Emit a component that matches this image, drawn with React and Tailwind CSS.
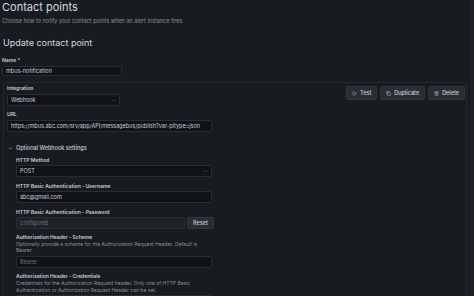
import { Play, Copy, Trash2, ChevronDown } from 'lucide-react';

const font = { fontFamily: 'Inter, "Noto Sans", sans-serif' };

function Label({ children, className = '' }) {
    return (
        <div className={`text-[5px] leading-[7px] font-semibold text-[#ccccdc] ${className}`}>
            {children}
        </div>
    );
}

function Input({ value, width, className = '', muted = false, children }) {
    return (
        <div
            className={`h-[12px] flex items-center justify-between px-[3px] rounded-[1.5px] border border-[#2a2d33] ${muted ? 'bg-[#1e2126] text-[#6e7079]' : 'bg-[#111217] text-[#ccccdc]'} text-[5.5px] ${width} ${className}`}
        >
            <span className="truncate">{value}</span>
            {children}
        </div>
    );
}

function Btn({ icon: Icon, label }) {
    return (
        <button className="h-[14px] px-[5px] flex items-center gap-[3px] rounded-[1.5px] bg-[#2a2d33] border border-[#33363c] text-[5.5px] font-medium text-[#ccccdc]">
            <Icon size={5} strokeWidth={2} />
            {label}
        </button>
    );
}

export default function App() {
    return (
        <div style={font} className="w-[474px] h-[296px] overflow-hidden bg-[#181b1f] flex">
            <div className="w-[467px] pl-[2px] flex flex-col">
                <h1 className="text-[11px] leading-[14px] text-[#d8d9e0] font-normal">Contact points</h1>
                <p className="mt-[4px] text-[5.5px] leading-[7px] text-[#8e8e99]">
                    Choose how to notify your contact points when an alert instance fires
                </p>
                <h2 className="mt-[12px] text-[9px] leading-[12px] text-[#d8d9e0] font-normal pl-[1px]">
                    Update contact point
                </h2>

                <Label className="mt-[8px]">Name *</Label>
                <Input value="mbus-notification" width="w-[120px]" className="mt-[2px]" />

                {/* Integration card */}
                <div className="mt-[6px] ml-[1px] border border-[#25282d] border-b-0 rounded-t-[2px] pl-[3px] pr-[1px] pt-[2px] flex-1">
                    <div className="flex items-start justify-between">
                        <div>
                            <Label>Integration</Label>
                            <Input value="Webhook" width="w-[113px]" className="mt-[2px]">
                                <ChevronDown size={5} className="text-[#8e8e99]" />
                            </Input>
                        </div>
                        <div className="flex gap-[3px] mt-[1px]">
                            <Btn icon={Play} label="Test" />
                            <Btn icon={Copy} label="Duplicate" />
                            <Btn icon={Trash2} label="Delete" />
                        </div>
                    </div>

                    <Label className="mt-[5px]">URL</Label>
                    <Input
                        value="https://mbus.abc.com/srv/app/API/messagebus/publish?var-pltype=json"
                        width="w-[205px]"
                        className="mt-[2px]"
                    />

                    <div className="mt-[12px] h-[8px] flex items-center gap-[3px] pl-[1px] text-[5.5px] font-medium text-[#ccccdc]">
                        <ChevronDown size={5} strokeWidth={2.5} />
                        <span>Optional Webhook settings</span>
                    </div>

                    <div className="pl-[9px]">
                        <Label className="mt-[4.5px]">HTTP Method</Label>
                        <Input value="POST" width="w-[196px]" className="mt-[1.5px]">
                            <ChevronDown size={5} className="text-[#8e8e99]" />
                        </Input>

                        <Label className="mt-[5.5px]">HTTP Basic Authentication - Username</Label>
                        <Input value="abc@gmail.com" width="w-[196px]" className="mt-[1.5px]" />

                        <Label className="mt-[5.5px]">HTTP Basic Authentication - Password</Label>
                        <div className="mt-[1.5px] flex gap-[2px]">
                            <Input value="configured" width="w-[169px]" muted />
                            <button className="h-[12px] w-[27px] rounded-[1.5px] bg-[#2a2d33] border border-[#33363c] text-[5.5px] font-medium text-[#ccccdc]">
                                Reset
                            </button>
                        </div>

                        <Label className="mt-[4.5px]">Authorization Header - Scheme</Label>
                        <p className="text-[5px] leading-[6.5px] text-[#8e8e99]">
                            Optionally provide a scheme for the Authorization Request Header. Default is
                            <br />
                            Bearer.
                        </p>
                        <Input value="Bearer" width="w-[196px]" className="mt-[2px] !text-[#6e7079]" />

                        <Label className="mt-[5.5px]">Authorization Header - Credentials</Label>
                        <p className="text-[5px] leading-[6.5px] text-[#8e8e99]">
                            Credentials for the Authorization Request header. Only one of HTTP Basic
                            <br />
                            Authentication or Authorization Request Header can be set.
                        </p>
                        <Input value="" width="w-[196px]" className="mt-[1.5px]" />
                    </div>
                </div>
            </div>
            <div className="ml-[3px] w-[4px] bg-[#1d2025]" />
        </div>
    );
}
